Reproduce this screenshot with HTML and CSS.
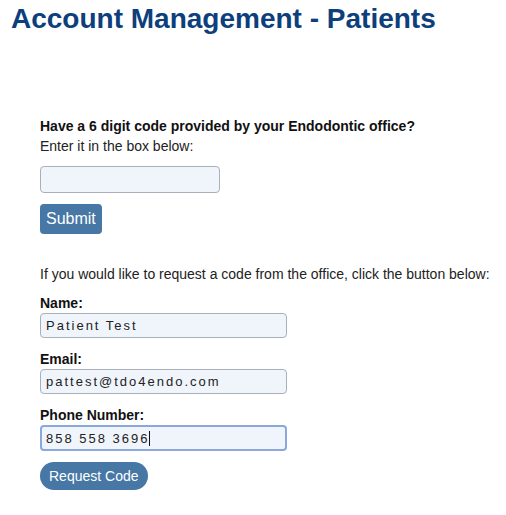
FILE: index.html
```html
<!DOCTYPE html>
<html>
<head>
<meta charset="utf-8">
<link rel="stylesheet" href="styles.css">
</head>
<body>
<h1 class="title">Account Management - Patients</h1>
<div class="content">
  <section class="block">
    <p class="lead">Have a 6 digit code provided by your Endodontic office?</p>
    <p class="sub">Enter it in the box below:</p>
    <input class="code-input" type="text">
    <button class="btn-submit" type="button">Submit</button>
  </section>
  <section class="block request">
    <p class="sub">If you would like to request a code from the office, click the button below:</p>
    <label class="field-label first">Name:</label>
    <input class="field" type="text" value="Patient Test">
    <label class="field-label">Email:</label>
    <input class="field" type="text" value="pattest@tdo4endo.com">
    <label class="field-label">Phone Number:</label>
    <div class="field field-focus">858 558 3696<span class="caret"></span></div>
    <button class="btn-request" type="button">Request Code</button>
  </section>
</div>
</body>
</html>
```
FILE: styles.css
```css
html, body {
  margin: 0;
  padding: 0;
  background: #ffffff;
  font-family: "Liberation Sans", Arial, sans-serif;
  color: #222222;
}
.title {
  margin: 0;
  padding: 4px 0 0 11px;
  font-size: 28px;
  line-height: 30px;
  font-weight: bold;
  color: #0d3f7c;
}
.content {
  padding: 82px 0 0 40px;
  display: flex;
  flex-direction: column;
}
.block {
  display: flex;
  flex-direction: column;
  align-items: flex-start;
}
.lead {
  margin: 0;
  font-size: 14px;
  line-height: 20px;
  font-weight: bold;
  color: #111111;
}
.sub {
  margin: 0;
  font-size: 14px;
  line-height: 20px;
  color: #222222;
}
.code-input {
  margin: 10px 0 0 0;
  box-sizing: border-box;
  width: 180px;
  height: 27px;
  border: 1px solid #a9b0b8;
  border-radius: 4px;
  background: #f0f5fb;
  padding: 0 6px;
  font: 13px "Liberation Sans", Arial, sans-serif;
}
.btn-submit {
  margin-top: 11px;
  height: 30px;
  padding: 0 6px;
  border: none;
  border-radius: 4px;
  background: #4677a5;
  color: #ffffff;
  font: 16px "Liberation Sans", Arial, sans-serif;
}
.request {
  margin-top: 30px;
}
.field-label {
  margin-top: 11px;
  font-size: 14px;
  line-height: 20px;
  font-weight: bold;
  color: #111111;
}
.field-label.first {
  margin-top: 9px;
}
.field {
  box-sizing: border-box;
  width: 247px;
  height: 25px;
  border: 1px solid #a9b0b8;
  border-radius: 4px;
  background: #f0f5fb;
  padding: 0 5px;
  font: 13px "Liberation Sans", Arial, sans-serif;
  letter-spacing: 2px;
  color: #222;
  display: flex;
  align-items: center;
}
.field-focus {
  border: 2px solid #8aa8dc;
  padding: 0 4px;
  height: 26px;
}
.caret {
  display: inline-block;
  width: 1px;
  height: 15px;
  background: #111;
  margin-left: -1px;
}
.btn-request {
  margin-top: 11px;
  height: 28px;
  padding: 0 9px;
  border: none;
  border-radius: 14px;
  background: #4677a5;
  color: #ffffff;
  font: 14px "Liberation Sans", Arial, sans-serif;
}
```
